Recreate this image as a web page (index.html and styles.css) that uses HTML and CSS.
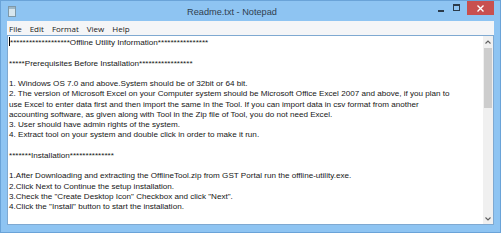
FILE: index.html
```html
<!DOCTYPE html>
<html>
<head>
<meta charset="utf-8">
<link rel="stylesheet" href="styles.css">
</head>
<body>
<div class="window">
  <div class="titlebar">
    <div class="app-icon">
      <svg width="8" height="11" viewBox="0 0 8 11">
        <rect x="0.5" y="0.5" width="7" height="10" fill="#d7e6ee" stroke="#7e98a8"/>
        <rect x="1" y="1" width="6" height="2" fill="#9fb8c6"/>
      </svg>
    </div>
    <div class="title">Readme.txt - Notepad</div>
    <div class="controls">
      <div class="btn min"><span class="min-bar"></span></div>
      <div class="btn max"><span class="max-box"></span></div>
      <div class="btn close">
        <svg width="7" height="7" viewBox="0 0 7 7"><path d="M0.5 0.5 L6.5 6.5 M6.5 0.5 L0.5 6.5" stroke="#fff" stroke-width="1.4"/></svg>
      </div>
    </div>
  </div>
  <div class="menubar">
    <span class="menu-item">File</span>
    <span class="menu-item">Edit</span>
    <span class="menu-item">Format</span>
    <span class="menu-item">View</span>
    <span class="menu-item">Help</span>
  </div>
  <div class="client">
    <div class="text"><span class="caret"></span>*******************Offline Utility Information****************

*****Prerequisites Before Installation*****************

1. Windows OS 7.0 and above.System should be of 32bit or 64 bit.
2. The version of Microsoft Excel on your Computer system should be Microsoft Office Excel 2007 and above, if you plan to
use Excel to enter data first and then import the same in the Tool. If you can import data in csv format from another
accounting software, as given along with Tool in the Zip file of Tool, you do not need Excel.
3. User should have admin rights of the system.
4. Extract tool on your system and double click in order to make it run.

*******Installation**************

1.After Downloading and extracting the OfflineTool.zip from GST Portal run the offline-utility.exe.
2.Click Next to Continue the setup installation.
3.Check the "Create Desktop Icon" Checkbox and click "Next".
4.Click the "Install" button to start the installation.</div>
    <div class="scrollbar">
      <div class="arrow">
        <svg width="6" height="4" viewBox="0 0 6 4"><path d="M0.5 3.5 L3 1 L5.5 3.5" fill="none" stroke="#606060" stroke-width="1.1"/></svg>
      </div>
      <div class="track"><div class="thumb"></div></div>
      <div class="arrow">
        <svg width="6" height="4" viewBox="0 0 6 4"><path d="M0.5 0.5 L3 3 L5.5 0.5" fill="none" stroke="#606060" stroke-width="1.1"/></svg>
      </div>
    </div>
  </div>
</div>
</body>
</html>
```
FILE: styles.css
```css
html, body {
  margin: 0;
  padding: 0;
  background: #8ec4f2;
}
.window {
  width: 501px;
  height: 233px;
  box-sizing: border-box;
  border: 1px solid #6aa3d8;
  background: #8ec4f2;
  display: flex;
  flex-direction: column;
  padding: 0 6px 7px 6px;
  overflow: hidden;
}
.titlebar {
  height: 20px;
  display: flex;
  align-items: center;
  flex: none;
}
.app-icon {
  width: 8px;
  height: 11px;
  margin-left: 1px;
  margin-top: 1px;
  display: flex;
}
.title {
  flex: 1;
  text-align: center;
  font-family: "Liberation Sans", Arial, sans-serif;
  font-size: 9.2px;
  color: #2e3e4e;
  padding-left: 16px;
  margin-top: 2px;
}
.controls {
  display: flex;
  align-self: flex-start;
  height: 14px;
}
.btn {
  display: flex;
  align-items: center;
  justify-content: center;
}
.btn.min {
  width: 17px;
}
.min-bar {
  width: 6px;
  height: 2px;
  background: #2b3b4b;
  margin-top: 5px;
}
.btn.max {
  width: 15px;
  margin-right: 3px;
}
.max-box {
  width: 5px;
  height: 4px;
  border: 1px solid #2b3b4b;
  border-top-width: 2px;
  margin-top: -2px;
}
.btn.close {
  width: 27px;
  height: 14px;
  background: #c8504f;
}
.menubar {
  height: 14px;
  background: #f4f5f7;
  display: flex;
  align-items: center;
  padding-left: 2px;
  font-family: "Open Sans", "Noto Sans", sans-serif;
  font-size: 8px;
  color: #1a1a1a;
  flex: none;
}
.menu-item {
  margin-right: 8px;
}
.client {
  flex: 1;
  display: flex;
  background: #fff;
  border: 1px solid #7fa9d1;
  min-height: 0;
}
.text {
  flex: 1;
  white-space: pre;
  overflow: hidden;
  font-family: "Liberation Sans", Arial, sans-serif;
  font-size: 8.1px;
  line-height: 10.25px;
  color: #161616;
  padding: 1px 0 0 1px;
}
.caret {
  display: inline-block;
  width: 1px;
  height: 9px;
  background: #000;
  vertical-align: -1px;
}
.scrollbar {
  width: 10px;
  background: #f0f0f0;
  display: flex;
  flex-direction: column;
  flex: none;
}
.arrow {
  height: 11px;
  display: flex;
  align-items: center;
  justify-content: center;
  flex: none;
}
.track {
  flex: 1;
  padding: 1px 1px 0 1px;
}
.thumb {
  height: 60px;
  background: #cdcdcd;
}
```
